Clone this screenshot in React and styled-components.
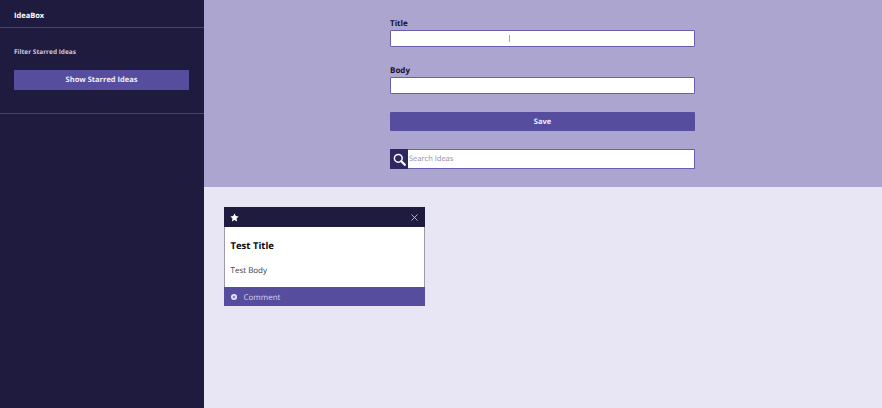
import styled, { createGlobalStyle } from 'styled-components';

const GlobalStyle = createGlobalStyle`
  html, body {
    margin: 0;
    height: 100%;
    background: #e8e5f5;
    font-family: "Open Sans", "Liberation Sans", sans-serif;
    text-rendering: geometricPrecision;
  }
  * {
    box-sizing: border-box;
  }
`;

const Page = styled.div`
  display: flex;
  width: 882px;
  height: 408px;
  overflow: hidden;
`;
const Sidebar = styled.aside`
  width: 203.5px;
  flex-shrink: 0;
  background: #1f1b3f;
  color: #fff;
`;
const Logo = styled.div`
  height: 28px;
  padding: 10px 14px 0;
  font-size: 7.5px;
  font-weight: 700;
  line-height: 12px;
  border-bottom: 1px solid #4a3f85;
`;
const FilterBox = styled.div`
  height: 86px;
  padding: 18px 14px 0;
  border-bottom: 1px solid #4a3f85;
`;
const FilterLabel = styled.div`
  font-size: 6.5px;
  font-weight: 700;
  line-height: 12px;
  color: #c9c5dc;
  margin-bottom: 12px;
`;
const StarButton = styled.button`
  display: block;
  width: 175px;
  height: 20px;
  padding: 0;
  border: 0;
  background: #564d9e;
  color: #efedf8;
  font-family: inherit;
  font-size: 7.5px;
  font-weight: 700;
  text-rendering: geometricPrecision;
`;
const Main = styled.main`
  flex: 1;
  display: flex;
  flex-direction: column;
`;
const FormArea = styled.section`
  height: 187px;
  background: #aca5cf;
  padding: 18px 0 0 186.5px;
`;
const Form = styled.div`
  width: 305px;
`;
const Label = styled.label`
  display: block;
  font-size: 8px;
  font-weight: 700;
  line-height: 12px;
  color: #14112d;
`;
const Field = styled.div`
  position: relative;
  height: 17px;
  margin-bottom: 18px;
  background: #fff;
  border: 1px solid #6a5fae;
  border-radius: 1px;
`;
const Caret = styled.span`
  position: absolute;
  left: 118px;
  top: 4px;
  width: 1px;
  height: 7px;
  background: #a5a5ad;
`;
const SaveButton = styled.button`
  display: block;
  width: 100%;
  height: 19px;
  padding: 0;
  border: 0;
  border-radius: 1px;
  background: #564d9e;
  color: #f1effa;
  font-family: inherit;
  font-size: 7.5px;
  font-weight: 700;
  text-rendering: geometricPrecision;
`;
const SearchRow = styled.div`
  display: flex;
  height: 20px;
  margin-top: 18px;
  background: #fff;
  border: 1px solid #6a5fae;
  border-left: 0;
`;
const SearchIcon = styled.div`
  width: 18px;
  margin: -1px 0;
  display: flex;
  align-items: center;
  justify-content: center;
  background: #2e2760;
`;
const SearchText = styled.div`
  padding-left: 1px;
  font-size: 7.5px;
  line-height: 18px;
  color: #8f8d9c;
`;
const Cards = styled.section`
  flex: 1;
  padding: 20px 20px;
`;
const Card = styled.article`
  width: 201px;
`;
const CardHeader = styled.div`
  display: flex;
  align-items: center;
  justify-content: space-between;
  height: 20px;
  padding: 0 7px 0 6px;
  background: #1f1b3f;
`;
const CardBody = styled.div`
  height: 61px;
  padding: 12px 6px 0;
  background: #fff;
  border-left: 1px solid #9c99a8;
  border-right: 1px solid #9c99a8;
`;
const CardTitle = styled.h2`
  margin: 0 0 12px;
  font-size: 9.5px;
  font-weight: 700;
  line-height: 14px;
  color: #0b0a14;
`;
const CardText = styled.p`
  margin: 0;
  font-size: 8px;
  line-height: 12px;
  color: #3d3c45;
`;
const CommentBar = styled.div`
  display: flex;
  align-items: center;
  gap: 7px;
  height: 19px;
  margin-top: -1px;
  padding: 1px 7px 0;
  background: #564d9e;
  color: #d8d4ee;
  font-size: 8px;
`;

const App = () => {
  return (
    <>
      <GlobalStyle />
      <Page>
        <Sidebar>
          <Logo>IdeaBox</Logo>
          <FilterBox>
            <FilterLabel>Filter Starred Ideas</FilterLabel>
            <StarButton>Show Starred Ideas</StarButton>
          </FilterBox>
        </Sidebar>
        <Main>
          <FormArea>
            <Form>
              <Label>Title</Label>
              <Field>
                <Caret />
              </Field>
              <Label>Body</Label>
              <Field />
              <SaveButton>Save</SaveButton>
              <SearchRow>
                <SearchIcon>
                  <svg width="13" height="13" viewBox="0 0 13 13" fill="none" stroke="#fff">
                    <circle cx="5.3" cy="5.3" r="3.9" strokeWidth="1.5" />
                    <path d="M8.3 8.3 L11.8 11.8" strokeWidth="2.2" strokeLinecap="round" />
                  </svg>
                </SearchIcon>
                <SearchText>Search Ideas</SearchText>
              </SearchRow>
            </Form>
          </FormArea>
          <Cards>
            <Card>
              <CardHeader>
                <svg width="9" height="9" viewBox="0 0 24 24" fill="#fff">
                  <path d="M12 1l3.4 7.2 7.6 1-5.6 5.4 1.5 7.8L12 18.6 5.1 22.4l1.5-7.8L1 9.2l7.6-1z" />
                </svg>
                <svg width="7" height="7" viewBox="0 0 7 7" stroke="#d5d2e6" strokeWidth="0.8">
                  <path d="M0.5 0.5 L6.5 6.5 M6.5 0.5 L0.5 6.5" />
                </svg>
              </CardHeader>
              <CardBody>
                <CardTitle>Test Title</CardTitle>
                <CardText>Test Body</CardText>
              </CardBody>
              <CommentBar>
                <svg width="6" height="6" viewBox="0 0 6 6">
                  <circle cx="3" cy="3" r="3" fill="#ece9f8" />
                  <path d="M3 1.6 V4.4 M1.6 3 H4.4" stroke="#564d9e" strokeWidth="0.8" />
                </svg>
                <span>Comment</span>
              </CommentBar>
            </Card>
          </Cards>
        </Main>
      </Page>
    </>
  );
};

export default App;
